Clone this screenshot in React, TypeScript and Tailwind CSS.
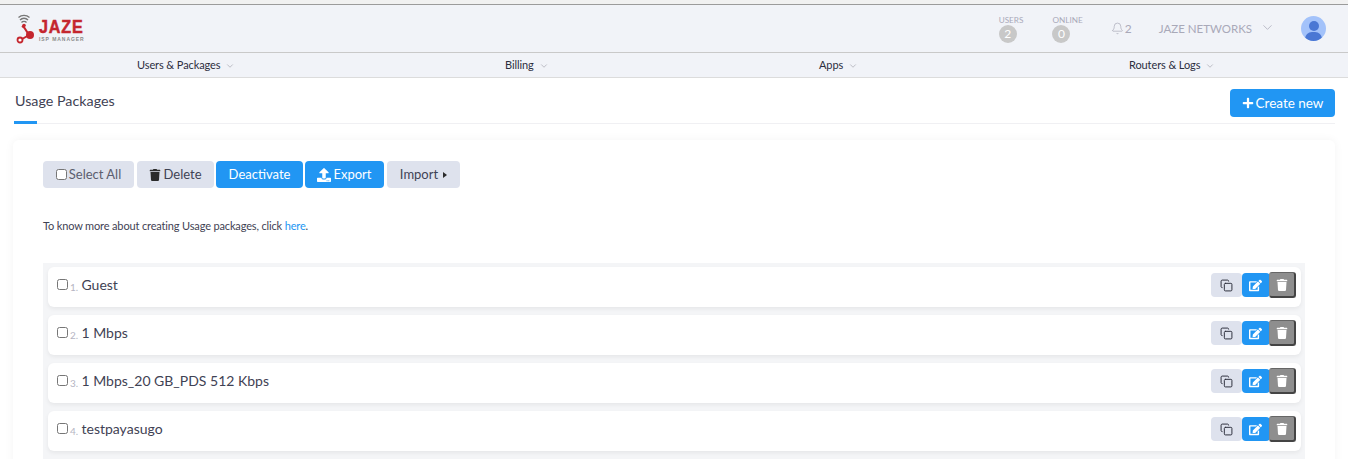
import { ChevronDown, Bell, Copy } from "lucide-react";
import { FaEdit, FaPlus, FaTrash, FaUpload } from "react-icons/fa";

function Logo() {
  return (
    <div className="flex items-start w-[68px]">
      <svg width="20" height="30" viewBox="0 0 20 30" className="shrink-0">
        <path d="M2.5 3.5a8 8 0 0 1 11 0" fill="none" stroke="#777" strokeWidth="1.3" />
        <path d="M4 6a5.5 5.5 0 0 1 8 0" fill="none" stroke="#777" strokeWidth="1.3" />
        <path d="M5.5 8.5a3.2 3.2 0 0 1 5 0" fill="none" stroke="#777" strokeWidth="1.3" />
        <path d="M6 12 L8.5 14 L13 21 L4.5 26" fill="none" stroke="#c4262e" strokeWidth="2" />
        <circle cx="8" cy="11.5" r="1.8" fill="#c4262e" />
        <circle cx="14" cy="21" r="4" fill="#c4262e" />
        <circle cx="4" cy="26" r="2.5" fill="#fff" stroke="#c4262e" strokeWidth="1.8" />
      </svg>
      <div className="flex flex-col mt-[5px] ml-[3px]">
        <span className="font-['Liberation_Sans'] font-bold text-[19px] leading-[16px] tracking-[1px] text-[#c4262e] scale-x-[0.85] origin-left [-webkit-text-stroke:0.5px_#c4262e]">JAZE</span>
        <span className="font-['Liberation_Sans'] text-[5px] leading-[6px] mt-[1px] font-bold tracking-[0.95px] text-[#8a8a8a] whitespace-nowrap">ISP MANAGER</span>
      </div>
    </div>
  );
}

function Stat({ label, value }: { label: string; value: string }) {
  return (
    <div className="flex flex-col items-start">
      <span className="text-[8.2px] leading-[10px] text-[#a9a9b8]">{label}</span>
      <span className="w-[18px] h-[18px] rounded-full bg-[#c8c8c8] text-white text-[12px] leading-[18px] text-center">{value}</span>
    </div>
  );
}

function NavItem({ label, className }: { label: string; className: string }) {
  return (
    <div className={`flex items-center ${className}`}>
      <span className="text-[11px] tracking-[-0.1px] text-[#2c2e3e]">{label}</span>
      <ChevronDown size={10} strokeWidth={1.3} className="ml-[5px] mt-[2px] text-[#8f8f9a]" />
    </div>
  );
}

function Btn({ children, blue, className = "" }: { children: React.ReactNode; blue?: boolean; className?: string }) {
  return (
    <div className={`h-[27px] rounded-[4px] flex items-center justify-center text-[13px] ${blue ? "bg-[#2196f3] text-white" : "bg-[#dee2ed] text-[#3f4254]"} ${className}`}>
      {children}
    </div>
  );
}

function Row({ n, name }: { n: number; name: string }) {
  return (
    <div className="h-10 bg-white rounded-[6px] ml-[5px] mr-[4px] flex items-center pl-[9px] pr-[5px] shadow-[0_2px_4px_rgba(0,0,0,0.06)]">
      <span className="w-[11px] h-[11px] border border-[#767676] rounded-[2.5px] mb-[5px] bg-white" />
      <span className="ml-[2px] text-[10px] text-[#b5b5c3] w-[10px]">{n}.</span>
      <span className="ml-[1.5px] text-[14px] text-[#3f4254] mb-[5px]">{name}</span>
      <div className="ml-auto flex items-center mb-[4px]">
        <div className="w-[31px] h-6 bg-[#dee2ed] rounded-[4px] flex items-center justify-center">
          <Copy size={13} strokeWidth={1.8} className="text-[#2b2d3b]" />
        </div>
        <div className="w-[28px] h-6 bg-[#2196f3] rounded-[4px] flex items-center justify-center pr-[1px]">
          <FaEdit size={13} className="text-white" />
        </div>
        <div className="w-[27px] h-[26px] -ml-[1px] bg-[#8e8e8e] rounded-[3px] border-r-2 border-b-2 border-t border-l border-t-[#666] border-l-[#888] border-r-[#444] border-b-[#444] flex items-center justify-center">
          <FaTrash size={12} className="text-white" />
        </div>
      </div>
    </div>
  );
}

export default function App() {
  return (
    <div className="h-[459px] overflow-hidden bg-white font-['Lato',sans-serif] text-[#3f4254]">
      <div className="h-[5px] bg-[#f1f1f1] border-b border-[#9b9b9b]" />
      <div className="h-[48px] bg-[#f1f3f8] border-b border-[#c9c9c9] flex items-center pl-[16px] pr-[22px]">
        <Logo />
        <div className="ml-auto flex items-center">
          <Stat label="USERS" value="2" />
          <div className="ml-[29px]"><Stat label="ONLINE" value="0" /></div>
          <div className="ml-[28px] flex items-center text-[#a9a9b8] text-[12px]">
            <Bell size={13} strokeWidth={1.3} />
            <span className="ml-[1px]">2</span>
          </div>
          <span className="ml-[27px] text-[11.5px] text-[#a9a9b8]">JAZE NETWORKS</span>
          <ChevronDown size={15} strokeWidth={1.2} className="ml-[8px] mb-[2px] text-[#a9a9b8]" />
          <div className="ml-[26px] w-[25px] h-[25px] rounded-full bg-[#a3c2fa] overflow-hidden flex flex-col items-center">
            <span className="mt-[5px] w-[10px] h-[10px] rounded-full bg-[#4a77d4]" />
            <span className="mt-[1px] w-[17px] h-[10px] rounded-t-[7px] bg-[#4a77d4]" />
          </div>
        </div>
      </div>
      <div className="h-[25px] bg-[#f1f3f8] border-b border-[#dcdcdc] flex items-center">
        <NavItem label="Users & Packages" className="ml-[137px] w-[368px]" />
        <NavItem label="Billing" className="w-[314px]" />
        <NavItem label="Apps" className="w-[310px]" />
        <NavItem label="Routers & Logs" className="" />
      </div>
      <div className="ml-[14px] mr-[13px] h-[46px] border-b border-[#f0f0f3] flex justify-between relative">
        <span className="text-[14.3px] ml-[1px] mt-[14px] leading-[18px]">Usage Packages</span>
        <div className="mt-[11px] w-[105px] h-[28px] bg-[#2196f3] rounded-[4px] text-white flex items-center justify-center text-[13.5px] leading-[18px]">
          <FaPlus size={12} className="mr-[2px]" />
          <span className="mb-[1px]">Create new</span>
        </div>
        <span className="absolute left-0 -bottom-[1px] w-[23px] h-[3px] bg-[#2196f3]" />
      </div>
      <div className="mx-[13px] mt-[16px] rounded-[6px] shadow-[0_0_10px_rgba(0,0,0,0.05)] pt-[21px] px-[30px] h-[400px]">
        <div className="flex">
          <Btn className="w-[91px]">
            <span className="w-[11px] h-[11px] border border-[#767676] rounded-[2.5px] bg-white mr-[2px]" />
            <span className="text-[#5c5e6e]">Select All</span>
          </Btn>
          <Btn className="w-[77px] ml-[3px]">
            <FaTrash size={12} className="text-[#2b2b2b] mr-[2px]" />
            <span>Delete</span>
          </Btn>
          <Btn blue className="w-[87px] ml-[2px]">Deactivate</Btn>
          <Btn blue className="w-[79px] ml-[2px]">
            <FaUpload size={14} className="mr-[2px]" />
            <span>Export</span>
          </Btn>
          <Btn className="w-[73px] ml-[3px]">
            <span>Import</span>
            <span className="ml-[5px] w-0 h-0 border-y-[3.5px] border-y-transparent border-l-[4px] border-l-[#2b2b2b] mt-[1px]" />
          </Btn>
        </div>
        <p className="mt-[30px] text-[11px] tracking-[-0.15px] leading-[16px]">
          To know more about creating Usage packages, click <span className="text-[#2196f3]">here</span>.
        </p>
        <div className="mt-[29px] bg-[#f4f5f7] pt-[4px] flex flex-col gap-2 pb-2">
          <Row n={1} name="Guest" />
          <Row n={2} name="1 Mbps" />
          <Row n={3} name="1 Mbps_20 GB_PDS 512 Kbps" />
          <Row n={4} name="testpayasugo" />
        </div>
      </div>
    </div>
  );
}
